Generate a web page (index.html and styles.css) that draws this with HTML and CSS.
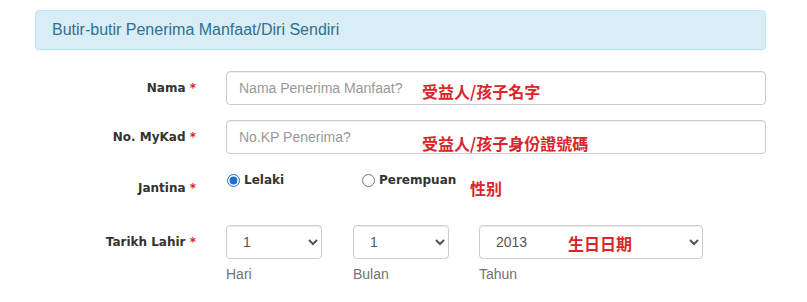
FILE: index.html
```html
<!DOCTYPE html>
<html>
<head>
  <meta charset="utf-8">
  <title>Butir-butir Penerima Manfaat</title>
  <link rel="stylesheet" href="styles.css">
</head>
<body>
  <div class="panel-heading">Butir-butir Penerima Manfaat/Diri Sendiri</div>

  <form class="form">
    <div class="row">
      <label class="control-label">Nama <span class="req">*</span></label>
      <div class="control">
        <input type="text" class="form-control" placeholder="Nama Penerima Manfaat?">
        <span class="note note-name">受益人/孩子名字</span>
      </div>
    </div>

    <div class="row">
      <label class="control-label">No. MyKad <span class="req">*</span></label>
      <div class="control">
        <input type="text" class="form-control" placeholder="No.KP Penerima?">
        <span class="note note-ic">受益人/孩子身份證號碼</span>
      </div>
    </div>

    <div class="row row-gender">
      <label class="control-label">Jantina <span class="req">*</span></label>
      <div class="control radios">
        <label class="radio radio-first"><input type="radio" name="jantina" checked> Lelaki</label>
        <label class="radio"><input type="radio" name="jantina"> Perempuan</label>
        <span class="note note-gender">性别</span>
      </div>
    </div>

    <div class="row">
      <label class="control-label">Tarikh Lahir <span class="req">*</span></label>
      <div class="control dates">
        <div class="date-col small">
          <select class="form-control"><option>1</option></select>
          <span class="help">Hari</span>
        </div>
        <div class="date-col small">
          <select class="form-control"><option>1</option></select>
          <span class="help">Bulan</span>
        </div>
        <div class="date-col wide">
          <select class="form-control"><option>2013</option></select>
          <span class="help">Tahun</span>
          <span class="note note-dob">生日日期</span>
        </div>
      </div>
    </div>
  </form>
</body>
</html>
```

FILE: styles.css
```css
body { margin: 0; font-family: "Liberation Sans", Arial, sans-serif; font-size: 14px; color: #333; background: #fff; }

.panel-heading { margin: 10px 41px 0 35px; height: 38px; line-height: 38px; padding: 0 16px; background: #d9edf7; border: 1px solid #bce8f1; border-radius: 4px; color: #31708f; font-size: 16px; box-shadow: 0 1px 1px rgba(0,0,0,.05); }

.form { margin: 21px 41px 0 0; }
.row { display: grid; grid-template-columns: 196px 1fr; column-gap: 30px; margin-bottom: 15px; }
.control-label { text-align: right; font-family: "DejaVu Sans", Verdana, sans-serif; font-weight: bold; font-size: 12px; line-height: 20px; padding-top: 7px; color: #333; }
.req { color: #d9262b; }
.control { position: relative; }

.form-control { display: block; width: 100%; box-sizing: border-box; height: 34px; padding: 6px 12px; font-family: "Liberation Sans", Arial, sans-serif; font-size: 14px; color: #555; background: #fff; border: 1px solid #ccc; border-radius: 4px; box-shadow: inset 0 1px 1px rgba(0,0,0,.075); }
.form-control::placeholder { color: #999; }

.row-gender { margin-bottom: 15px; }
.row-gender .control-label { padding-top: 9px; height: 32px; }
.radios { display: flex; align-items: flex-start; padding-top: 1px; }
.radio { display: flex; align-items: center; gap: 4px; font-family: "DejaVu Sans", Verdana, sans-serif; font-weight: bold; font-size: 12px; line-height: 20px; }
.radio input { margin: 0 0 0 1px; width: 13px; height: 13px; accent-color: #1a6fd1; }
.radio-first { width: 135px; }

.dates { display: flex; gap: 31px; }
.date-col { position: relative; }
.date-col.small { width: 96px; }
.date-col.wide { width: 224px; margin-left: -1px; }
.help { display: block; margin-top: 5px; line-height: 20px; color: #737373; }

.note { position: absolute; font-family: "Noto Sans CJK TC", "Noto Sans CJK SC", sans-serif; font-weight: bold; font-size: 16px; line-height: 18px; color: #d9262b; white-space: nowrap; }
.note-name { left: 196px; top: 11px; }
.note-ic { left: 196px; top: 14px; }
.note-gender { left: 244px; top: 10px; }
.note-dob { left: 89px; top: 9px; }
```
